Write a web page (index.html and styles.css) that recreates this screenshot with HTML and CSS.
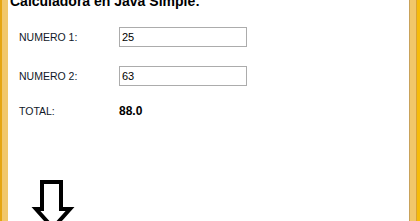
FILE: index.html
```html
<!DOCTYPE html>
<html>
<head>
<meta charset="utf-8">
<link rel="stylesheet" href="styles.css">
</head>
<body>
<div class="window">
  <div class="frame-left"><div class="edge-dark"></div><div class="edge-light"></div></div>
  <div class="content">
    <h1 class="title">Calculadora en Java Simple:</h1>
    <div class="form">
      <div class="row"><span class="label">NUMERO 1:</span><input class="field" type="text" value="25"></div>
      <div class="row row-2"><span class="label">NUMERO 2:</span><input class="field" type="text" value="63"></div>
      <div class="row row-total"><span class="label">TOTAL:</span><span class="result">88.0</span></div>
    </div>
    <svg class="arrow" width="50" height="45" viewBox="0 0 50 45">
      <path d="M6 33 H12 V6 H31 V33 H40 L23 52 L6 33 Z" fill="none" stroke="#000" stroke-width="4" stroke-linejoin="miter"/>
    </svg>
  </div>
  <div class="frame-right"><div class="line-a"></div><div class="edge-light"></div><div class="line-b"></div><div class="edge-yellow"></div></div>
</div>
</body>
</html>
```
FILE: styles.css
```css
html, body {
  margin: 0;
  padding: 0;
  width: 420px;
  height: 221px;
  overflow: hidden;
  background: #ffffff;
}
.window {
  display: flex;
  width: 420px;
  height: 221px;
}
.frame-left {
  display: flex;
  width: 8px;
  flex: none;
}
.edge-dark {
  width: 2px;
  background: #e5a512;
}
.edge-light {
  width: 6px;
  background: #f1c76b;
}
.frame-right {
  display: flex;
  width: 11px;
  flex: none;
}
.line-a {
  width: 1px;
  background: #c9a25a;
}
.line-b {
  width: 1px;
  background: #d8a236;
}
.edge-yellow {
  width: 3px;
  background: #f6bb0c;
}
.content {
  flex: 1;
  background: #ffffff;
  padding: 0 2px;
  overflow: hidden;
  font-family: "Liberation Sans", Arial, sans-serif;
  color: #000;
}
.title {
  margin: -6px 0 0 0;
  font-size: 14px;
  line-height: 14px;
  height: 14px;
  font-weight: bold;
  white-space: nowrap;
}
.form {
  margin-top: 19px;
  padding-left: 9px;
}
.row {
  display: flex;
  align-items: center;
  height: 20px;
}
.row-2 {
  margin-top: 19px;
}
.row-total {
  margin-top: 18px;
  height: 14px;
}
.label {
  width: 100px;
  font-size: 10.5px;
  color: #101828;
}
.field {
  box-sizing: border-box;
  width: 128px;
  height: 20px;
  margin: 0;
  padding: 0 0 0 2px;
  border: 1px solid #acacac;
  font-family: "Liberation Sans", Arial, sans-serif;
  font-size: 11px;
  color: #000;
  outline: none;
}
.result {
  font-size: 12px;
  font-weight: bold;
}
.arrow {
  display: block;
  margin: 58px 0 0 20px;
  overflow: visible;
}
```
